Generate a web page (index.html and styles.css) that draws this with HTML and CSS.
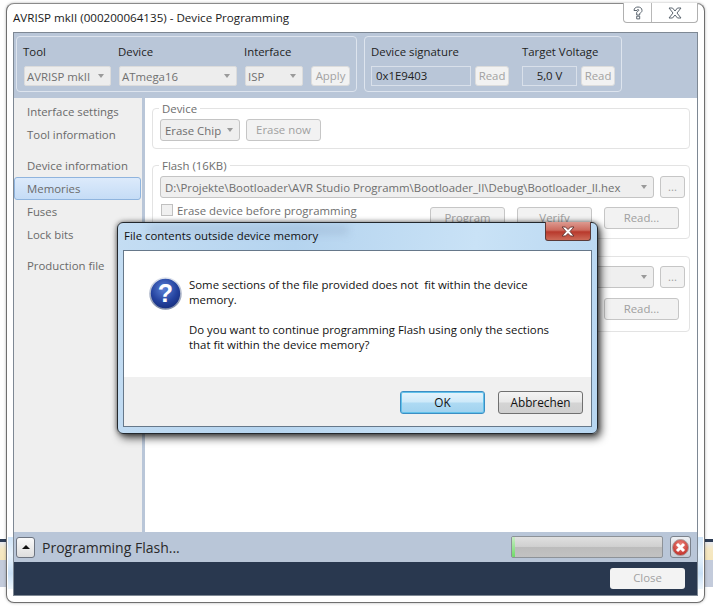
FILE: index.html
```html
<!DOCTYPE html>
<html lang="en">
<head>
<meta charset="utf-8">
<title>Device Programming</title>
<link rel="stylesheet" href="styles.css">
</head>
<body>
<div class="backdrop backdrop-left"><i class="bd-line"></i><i class="bd-yellow"></i><i class="bd-blue"></i></div>
<div class="backdrop backdrop-right"><i class="bd-line"></i><i class="bd-yellow"></i><i class="bd-blue"></i></div>

<div class="window">
  <div class="glass glass-left"></div>
  <div class="glass glass-right"></div>
  <div class="titlebar">AVRISP mkII (000200064135) - Device Programming</div>
  <div class="caption-buttons">
    <span class="cap-btn cap-help">
      <svg width="12" height="14" viewBox="0 0 12 14"><path d="M2 4.500C2 2 4 1 6 1s4 1 4 3.400c0 1.800-1.300 2.400-2.300 3V9H4.700V6.300C4.700 5.500 6.800 5.200 6.800 4.200 6.800 3.700 6.400 3.500 6 3.500S5 3.800 5 4.500ZM4.700 10.200h3v2.700h-3Z" fill="#fff" stroke="#5c6670" stroke-width="1"/></svg>
    </span>
    <span class="cap-btn cap-close">
      <svg width="14" height="12" viewBox="0 0 14 12"><path d="M1 1h3.500L7 4l2.500-3H13L9 6l4 5H9.500L7 8l-2.500 3H1l4-5Z" fill="#fff" stroke="#5c6670" stroke-width="1"/></svg>
    </span>
  </div>

  <div class="client">
    <header class="toolbar">
      <div class="tgroup tgroup-tool">
        <div class="field"><label class="tlabel">Tool</label><div class="combo combo-head w-tool"><span>AVRISP mkII</span><b class="arrow"></b></div></div>
        <div class="field"><label class="tlabel">Device</label><div class="combo combo-head w-device"><span>ATmega16</span><b class="arrow"></b></div></div>
        <div class="field"><label class="tlabel">Interface</label><div class="combo combo-head w-iface"><span>ISP</span><b class="arrow"></b></div></div>
        <div class="field"><label class="tlabel">&nbsp;</label><div class="hbtn w-apply">Apply</div></div>
      </div>
      <div class="tgroup tgroup-read">
        <div class="field"><label class="tlabel">Device signature</label>
          <div class="readrow"><div class="readout w-sig">0x1E9403</div><div class="hbtn w-read">Read</div></div></div>
        <div class="field"><label class="tlabel">Target Voltage</label>
          <div class="readrow"><div class="readout w-volt">5,0 V</div><div class="hbtn w-read">Read</div></div></div>
      </div>
    </header>

    <div class="main">
      <nav class="sidebar">
        <div class="nav">Interface settings</div>
        <div class="nav">Tool information</div>
        <div class="nav nav-gap">Device information</div>
        <div class="nav nav-active">Memories</div>
        <div class="nav">Fuses</div>
        <div class="nav">Lock bits</div>
        <div class="nav nav-gap">Production file</div>
      </nav>
      <section class="content">
        <fieldset class="box">
          <legend>Device</legend>
          <div class="row">
            <div class="combo w-erase"><span>Erase Chip</span><b class="arrow"></b></div>
            <div class="btn w-erasenow">Erase now</div>
          </div>
        </fieldset>
        <fieldset class="box box-flash">
          <legend>Flash (16KB)</legend>
          <div class="row">
            <div class="combo grow"><span>D:\Projekte\Bootloader\AVR Studio Programm\Bootloader_II\Debug\Bootloader_II.hex</span><b class="arrow"></b></div>
            <div class="btn w-dots">...</div>
          </div>
          <div class="row2">
            <div class="checks">
              <div class="check"><i class="checkbox"></i>Erase device before programming</div>
            </div>
            <div class="actions">
              <div class="btn w-action">Program</div>
              <div class="btn w-action">Verify</div>
              <div class="btn w-action">Read...</div>
            </div>
          </div>
        </fieldset>
        <fieldset class="box box-eeprom">
          <div class="row">
            <div class="combo grow"><span></span><b class="arrow"></b></div>
            <div class="btn w-dots">...</div>
          </div>
          <div class="row3">
            <div class="btn w-action">Read...</div>
          </div>
        </fieldset>
      </section>
    </div>

    <div class="status">
      <div class="toggle"><b class="up"></b></div>
      <div class="status-text">Programming Flash...</div>
      <div class="progress"><i class="progress-fill"></i></div>
      <div class="stop">
        <svg width="17" height="17" viewBox="0 0 17 17">
          <defs><radialGradient id="rg" cx="50%" cy="35%" r="65%"><stop offset="0" stop-color="#ee8a80"/><stop offset="1" stop-color="#c02c26"/></radialGradient></defs>
          <circle cx="8.500" cy="8.500" r="8" fill="url(#rg)" stroke="#a8a0a0"/>
          <path d="M5 5l7 7M12 5l-7 7" stroke="#fff" stroke-width="3"/>
        </svg>
      </div>
    </div>
    <footer class="footer"><div class="close-btn">Close</div></footer>
  </div>
</div>

<div class="dialog">
  <i class="dlg-smear"></i>
  <div class="dlg-title">File contents outside device memory</div>
  <div class="dlg-close">
    <svg width="14" height="11" viewBox="0 0 14 11"><path d="M1 1h3.500L7 3.500 9.500 1H13L9 5.500l4 4.500H9.500L7 7.500 4.500 10H1l4-4.500Z" fill="#fff" stroke="#6a3a36" stroke-width="1"/></svg>
  </div>
  <div class="dlg-frame">
    <div class="dlg-body">
      <svg class="dlg-icon" width="33" height="33" viewBox="0 0 33 33">
        <defs>
          <radialGradient id="blue" cx="45%" cy="35%" r="70%"><stop offset="0" stop-color="#5b82d6"/><stop offset=".6" stop-color="#25439f"/><stop offset="1" stop-color="#142a78"/></radialGradient>
          <linearGradient id="ring" x1="0" y1="0" x2="0" y2="1"><stop offset="0" stop-color="#dfe4ee"/><stop offset="1" stop-color="#7f8ba6"/></linearGradient>
        </defs>
        <circle cx="16.500" cy="16.500" r="15.500" fill="url(#blue)" stroke="url(#ring)" stroke-width="1.600"/>
        <text class="dlg-q" x="16.500" y="25" text-anchor="middle">?</text>
      </svg>
      <div class="dlg-text">
        <p>Some sections of the file provided does not&nbsp; fit within the device memory.</p>
        <p>Do you want to continue programming Flash using only the sections that fit within the device memory?</p>
      </div>
    </div>
    <div class="dlg-foot">
      <div class="dbtn dbtn-default">OK</div>
      <div class="dbtn">Abbrechen</div>
    </div>
  </div>
</div>
</body>
</html>
```
FILE: styles.css
```css
* { box-sizing: border-box; }
html, body { margin: 0; padding: 0; width: 713px; height: 611px; overflow: hidden; background: #fff; }
body { font-family: "Open Sans", "Noto Sans", sans-serif; font-size: 11.4px; color: #222; position: relative; }

/* desktop fragments behind the window */
.backdrop { position: absolute; top: 539px; width: 9px; display: flex; flex-direction: column; }
.backdrop-left { left: 0; }
.backdrop-right { right: 0; }
.bd-line { height: 3px; background: #2e3d55; }
.bd-yellow { height: 18px; background: linear-gradient(#e8eaf0 0, #f5e8c4 40%, #f5e6bc 100%); }
.bd-blue { height: 27px; background: #c3cbdb; }

/* main window */
.window {
  position: absolute; left: 6px; top: 3px; width: 699px; height: 600px;
  background: #fff; border: 1px solid #6f6f6f; border-top-color: #8a8a8a;
  border-radius: 8px; box-shadow: 0 0 3px rgba(0,0,0,.3);
  padding: 28px 6px 6px 6px; display: flex;
}
.glass { position: absolute; width: 5px; top: 533px; height: 52px; background: linear-gradient(#cfe4f8, #e9f3fc 35%, #c9e0f6 70%, #eef6fd); }
.glass-left { left: 1px; }
.glass-right { right: 1px; }
.titlebar { position: absolute; left: 6px; top: 5px; font-size: 11.600px; line-height: 18px; color: #1a1a1a; }
.caption-buttons {
  position: absolute; right: 6px; top: -1px; width: 75px; height: 20px; display: flex;
  background: #fff; border: 1px solid #b0b0b0; border-top: 0; border-radius: 0 0 4px 4px;
}
.cap-btn { display: flex; align-items: center; justify-content: center; }
.cap-help { width: 28px; border-right: 1px solid #b8b8b8; }
.cap-close { flex: 1; }

.client { flex: 1; display: flex; flex-direction: column; border: 1px solid #7e8894; background: #b9c6d8; }

/* toolbar */
.toolbar { height: 65px; padding: 3px 3px 0 2px; display: flex; gap: 7px; flex: none; }
.tgroup { height: 56px; border: 1px solid #dde4ee; border-radius: 4px; padding: 8px 6px 0; display: flex; }
.tgroup-tool { width: 341px; gap: 8px; padding-left: 7px; }
.tgroup-tool .tlabel { margin-left: -1px; }
.tgroup-read { width: 258px; gap: 13px; }
.field { display: flex; flex-direction: column; }
.tlabel { height: 16px; line-height: 14px; margin-bottom: 5px; color: #1e1e1e; font-size: 11.4px; }
.readrow { display: flex; gap: 4px; }
.readout { height: 20px; line-height: 18px; border: 1px solid #d9e0ea; padding: 0 4px; color: #222; }
.w-sig { width: 100px; }
.w-volt { width: 55px; text-align: center; }
.w-read { width: 34px; }
.w-tool { width: 87px; }
.w-device { width: 118px; }
.w-iface { width: 58px; }
.w-apply { width: 39px; }
.hbtn {
  height: 20px; line-height: 18px; text-align: center; color: #a2a2a2;
  background: #f2f2f2; border: 1px solid #dcdcdc; border-radius: 3px;
}

/* combos and buttons */
.combo {
  height: 22px; display: flex; align-items: center; justify-content: space-between;
  background: #efefef; border: 1px solid #c4c4c4; border-radius: 3px; padding: 0 6px 0 4px; color: #6e6e6e;
  white-space: nowrap;
}
.combo-head { height: 20px; border-color: #dcdcdc; color: #707070; background: #ededed; border-radius: 2px; padding-left: 2px; }
.arrow { width: 0; height: 0; border: 3.500px solid transparent; border-top: 4px solid #9a9a9a; border-bottom: 0; flex: none; }
.btn {
  height: 22px; line-height: 20px; text-align: center; color: #a0a0a0;
  background: #f2f2f2; border: 1px solid #c6c6c6; border-radius: 3px; flex: none;
}
.grow { flex: 1; min-width: 0; }
.w-erase { width: 80px; }
.w-erasenow { width: 75px; }
.w-dots { width: 25px; }
.w-action { width: 75px; }

/* main */
.main { flex: 1; display: flex; min-height: 0; background: #fff; }
.sidebar { width: 131px; flex: none; background: #efefef; border-right: 3px solid #b9c6d8; padding: 2px 1px 0 0; }
.nav { height: 23px; line-height: 22px; padding-left: 12px; color: #6a6a6a; border: 1px solid transparent; border-radius: 3px; }
.nav-gap { margin-top: 8px; }
.nav-active { background: linear-gradient(#dceafb, #c5dcf6); border-color: #8fb4de; }
.content { flex: 1; padding: 3px 7px 0; background: #fff; }

.box { margin: 0 0 9px; padding: 3px 4px 7px 7px; border: 1px solid #e3e3e3; border-radius: 4px; }
.box legend { padding: 0 3px; margin-left: -1px; line-height: 15px; color: #6e6e6e; }
.box-eeprom { margin-top: 17px; padding-top: 9px; padding-bottom: 11px; }
.row { display: flex; gap: 6px; }
.row2 { display: flex; justify-content: space-between; margin-top: 6px; padding-right: 6px; height: 27px; }
.row3 { display: flex; justify-content: flex-end; margin-top: 10px; padding-right: 6px; }
.checks { padding-left: 1px; }
.check { display: flex; align-items: center; gap: 4px; height: 12px; margin-bottom: 7px; color: #6e6e6e; }
.checkbox { width: 12px; height: 12px; border: 1px solid #c0c0c0; background: #f0f0f0; }
.actions { display: flex; gap: 12px; margin-top: 3px; }

/* status */
.status { height: 30px; flex: none; display: flex; align-items: center; padding: 0 6px 0 2px; background: #b9c6d8; }
.toggle {
  width: 19px; height: 21px; display: flex; align-items: center; justify-content: center;
  background: linear-gradient(#fafafa, #dedede); border: 1px solid #6d7480; border-radius: 3px;
}
.up { width: 0; height: 0; border: 4px solid transparent; border-bottom: 4px solid #111; border-top: 0; }
.status-text { flex: 1; margin-left: 7px; font-size: 14px; color: #2a2a2a; }
.progress {
  width: 152px; height: 22px; position: relative; overflow: hidden; border: 1px solid #8d9298; border-radius: 2px;
  background: linear-gradient(#e0e0e0 0, #cfcfcf 50%, #bcbcbc 52%, #c2c2c2 100%);
}
.progress-fill { position: absolute; left: 0; top: 0; bottom: 0; width: 3px; background: linear-gradient(#c8ecc4, #6fdc68); }
.stop {
  width: 21px; height: 22px; margin-left: 7px; display: flex; align-items: center; justify-content: center;
  background: linear-gradient(#eef0f4, #c6ccd6); border: 1px solid #7b828c; border-radius: 3px;
}
.footer { height: 33px; flex: none; background: #29384f; display: flex; justify-content: flex-end; padding: 6px 12px 0 0; }
.close-btn {
  width: 75px; height: 21px; line-height: 20px; text-align: center; color: #a2a2a2;
  background: #f3f3f3; border-radius: 3px; font-size: 11.4px;
}

/* dialog */
.dialog {
  position: absolute; left: 117px; top: 222px; width: 481px; height: 212px;
  border: 1px solid #23282d; border-radius: 6px;
  background: linear-gradient(100deg, #c4ddf3 0, #b5d4ef 35%, #c9e2f6 70%, #b7d6f1 100%);
  box-shadow: 3px 4px 9px rgba(0,0,0,.7), 0 0 5px rgba(0,0,0,.5);
  padding: 27px 5px 6px 5px; display: flex;
}
.dlg-smear { position: absolute; left: 30px; top: 3px; width: 200px; height: 8px; background: rgba(120,140,170,.25); filter: blur(4px); }
.dlg-title { position: absolute; left: 6px; top: 4px; line-height: 17px; font-size: 11.4px; color: #111; }
.dlg-close {
  position: absolute; right: 6px; top: -1px; width: 46px; height: 19px;
  display: flex; align-items: center; justify-content: center;
  background: linear-gradient(#dd9a90 0, #cc6a5e 45%, #b8392c 55%, #cc6a58 100%);
  border: 1px solid #5a3a38; border-top: 0; border-radius: 0 0 3px 3px;
}
.dlg-frame { flex: 1; display: flex; flex-direction: column; border: 1px solid #66788a; background: #fff; }
.dlg-body { flex: 1; display: flex; padding: 26px 20px 0 25px; }
.dlg-icon { flex: none; }
.dlg-q { font-family: "Liberation Sans", sans-serif; font-weight: 700; font-size: 25px; fill: #fff; }
.dlg-text { margin-left: 7px; font-size: 11.4px; line-height: 15px; color: #111; width: 375px; }
.dlg-text p { margin: 0 0 15px; }
.dlg-foot { height: 49px; flex: none; background: #f0f0f0; display: flex; justify-content: flex-end; gap: 13px; padding: 14px 8px 0 0; }
.dbtn {
  width: 85px; height: 23px; line-height: 21px; text-align: center; color: #111; font-size: 11.8px;
  background: linear-gradient(#f4f4f4 0, #e8e8e8 48%, #d4d4d4 52%, #cfcfcf 100%);
  border: 1px solid #707070; border-radius: 3px;
}
.dbtn-default {
  background: linear-gradient(#e6f4fc 0, #cde9f9 48%, #aedaf3 52%, #a0d2ef 100%);
  border-color: #3c8ec4; box-shadow: inset 0 0 0 1px #62c2ea;
}
```
